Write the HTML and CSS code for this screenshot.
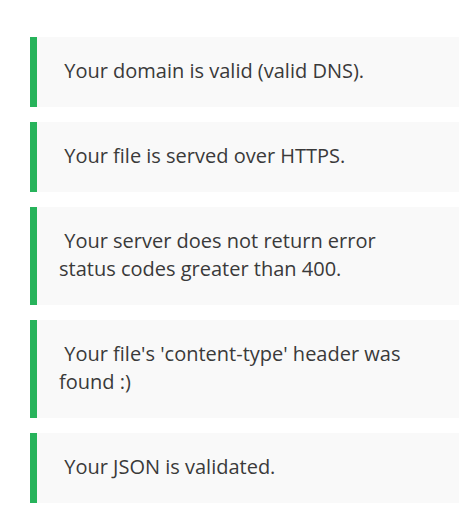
FILE: index.html
```html
<!DOCTYPE html>
<html>
<head>
<meta charset="utf-8">
<link rel="stylesheet" href="styles.css">
</head>
<body>
<div class="list">
  <div class="check"> Your domain is valid (valid DNS).</div>
  <div class="check"> Your file is served over HTTPS.</div>
  <div class="check"> Your server does not return error status codes greater than 400.</div>
  <div class="check"> Your file's 'content-type' header was found :)</div>
  <div class="check"> Your JSON is validated.</div>
</div>
</body>
</html>
```
FILE: styles.css
```css
html, body {
  margin: 0;
  padding: 0;
  background: #ffffff;
}
body {
  font-family: "Open Sans", "Liberation Sans", sans-serif;
}
.list {
  display: flex;
  flex-direction: column;
  gap: 15px;
  padding: 37px 15px 0 30px;
}
.check {
  background: #f9f9f9;
  border-left: 7px solid #27b35b;
  padding: 20px 30px 22px 22px;
  font-size: 20px;
  line-height: 28px;
  color: #3a3a3a;
  white-space: pre-wrap;
}
```
